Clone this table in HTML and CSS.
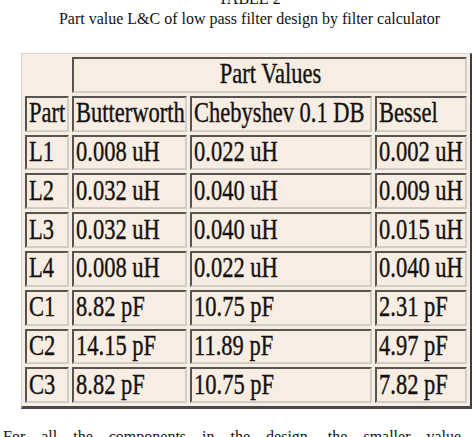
FILE: index.html
```html
<!DOCTYPE html>
<html>
<head>
<meta charset="utf-8">
<link rel="stylesheet" href="styles.css">
</head>
<body>
<div class="page">
  <div class="caption">
    <div class="cap-label">TABLE 2</div>
    <div class="cap-title">Part value L&amp;C of low pass filter design by filter calculator</div>
  </div>
  <table class="parts">
    <colgroup>
      <col class="c-part"><col class="c-butter"><col class="c-cheb"><col class="c-bessel">
    </colgroup>
    <tr><td class="blank"></td><td colspan="3" class="center"><span class="t">Part Values</span></td></tr>
    <tr><td><span class="t">Part</span></td><td><span class="t">Butterworth</span></td><td><span class="t">Chebyshev 0.1 DB</span></td><td><span class="t">Bessel</span></td></tr>
    <tr><td><span class="t">L1</span></td><td><span class="t">0.008 uH</span></td><td><span class="t">0.022 uH</span></td><td><span class="t">0.002 uH</span></td></tr>
    <tr><td><span class="t">L2</span></td><td><span class="t">0.032 uH</span></td><td><span class="t">0.040 uH</span></td><td><span class="t">0.009 uH</span></td></tr>
    <tr><td><span class="t">L3</span></td><td><span class="t">0.032 uH</span></td><td><span class="t">0.040 uH</span></td><td><span class="t">0.015 uH</span></td></tr>
    <tr><td><span class="t">L4</span></td><td><span class="t">0.008 uH</span></td><td><span class="t">0.022 uH</span></td><td><span class="t">0.040 uH</span></td></tr>
    <tr><td><span class="t">C1</span></td><td><span class="t">8.82 pF</span></td><td><span class="t">10.75 pF</span></td><td><span class="t">2.31 pF</span></td></tr>
    <tr><td><span class="t">C2</span></td><td><span class="t">14.15 pF</span></td><td><span class="t">11.89 pF</span></td><td><span class="t">4.97 pF</span></td></tr>
    <tr><td><span class="t">C3</span></td><td><span class="t">8.82 pF</span></td><td><span class="t">10.75 pF</span></td><td><span class="t">7.82 pF</span></td></tr>
  </table>
  <p class="after">For all the components in the design, the smaller value of</p>
</div>
</body>
</html>
```

FILE: styles.css
```css
html, body {
  margin: 0;
  padding: 0;
  background: #ffffff;
}

body {
  font-family: "Liberation Serif", "Times New Roman", serif;
  color: #141210;
  width: 474px;
  height: 437px;
  overflow: hidden;
}

.caption {
  margin-top: -11px;
  padding-left: 25px;
  text-align: center;
  font-size: 16px;
  line-height: 20px;
}

.parts {
  margin-top: 24px;
  margin-left: 21px;
  width: 451px;
  table-layout: fixed;
  border-collapse: separate;
  border-spacing: 3px 3.5px;
  background: #f8ede3;
  border-style: solid;
  border-width: 1px 2px 3px 1px;
  border-color: #d9d4cf #3f3d3b #4a4846 #d9d4cf;
}

.c-part { width: 44px; }
.c-butter { width: 115px; }
.c-cheb { width: 182px; }
.c-bessel { width: 92px; }

.parts tr {
  height: 35.8px;
}

.parts td {
  box-sizing: border-box;
  padding: 0 0 1px 2px;
  border-style: solid;
  border-width: 2px;
  border-color: #58534f #d3cdc7 #d3cdc7 #58534f;
  font-size: 22.5px;
  line-height: 22px;
  vertical-align: middle;
  white-space: nowrap;
  overflow: hidden;
}

.parts td.blank {
  border: none;
}

.parts td.center {
  text-align: center;
}

.t {
  display: inline-block;
  transform: scaleY(1.33);
  transform-origin: 50% 50%;
  -webkit-text-stroke: 0.3px #141210;
}

.after {
  margin: 18px 0 0 0;
  padding-left: 3px;
  font-size: 16px;
  line-height: 20px;
  word-spacing: 12px;
  white-space: nowrap;
}
```
